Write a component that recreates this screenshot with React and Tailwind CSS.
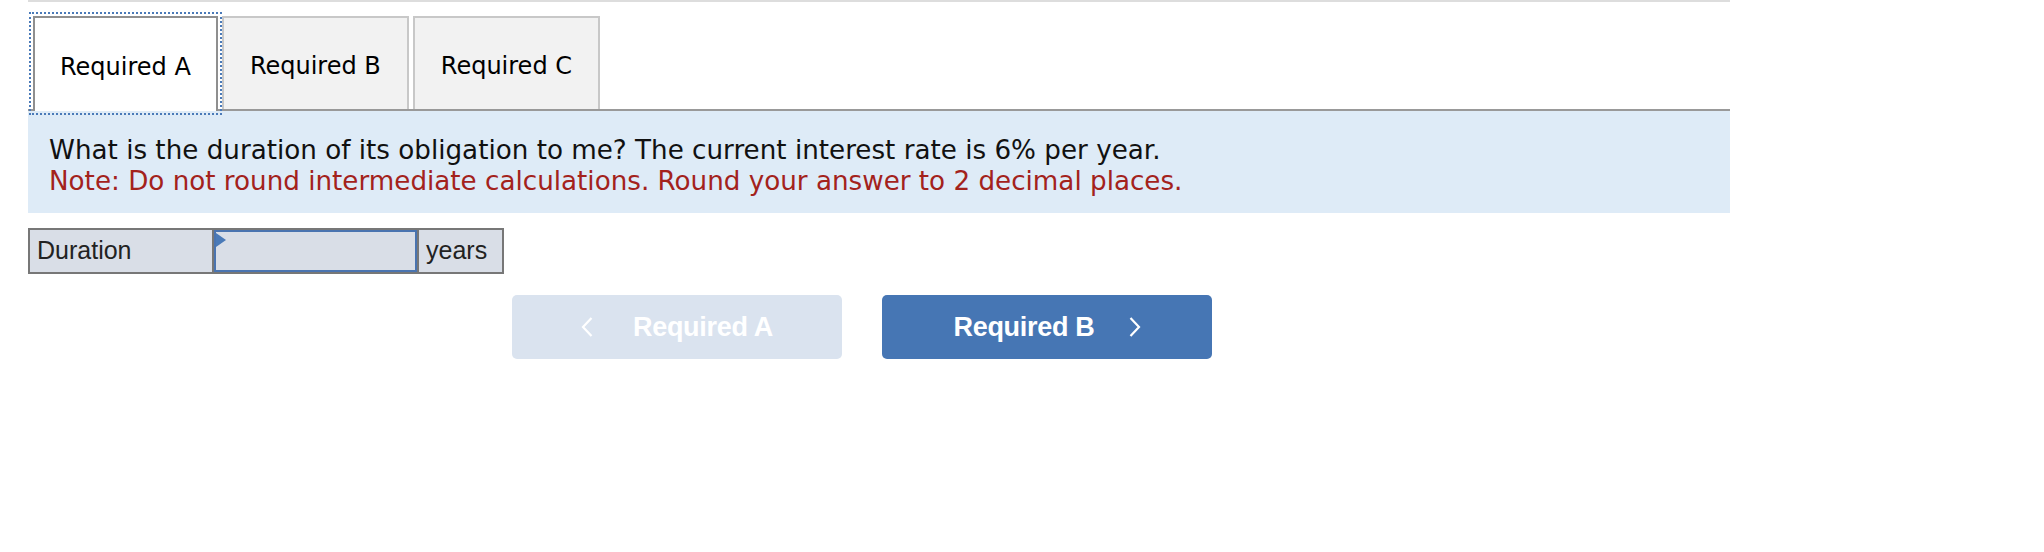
export default function App() {
  const dv = { fontFamily: '"DejaVu Sans", Verdana, sans-serif' };
  const ar = { fontFamily: '"Liberation Sans", Arial, sans-serif' };
  return (
    <div className="bg-white w-[2044px] h-[552px] pl-[28px]">
      <div className="w-[1702px]">
        <div className="h-[2px] bg-[#dddddd]" />
        <div className="mt-[14px] flex items-start gap-[4px] border-b-2 border-[#999999] h-[95px]" style={dv}>
          <div className="relative z-10 ml-[5px] h-[95px] bg-white border-2 border-b-0 border-[#8f8f8f] px-[25px] pt-[5px] flex items-center text-[24px] text-black outline-2 outline-dotted outline-[#4a7ab8] outline-offset-[2px]">
            Required A
          </div>
          <div className="h-[93px] bg-[#f2f2f2] border-2 border-b-0 border-[#c8c8c8] px-[26px] pt-[5px] flex items-center text-[24px] text-black">
            Required B
          </div>
          <div className="h-[93px] bg-[#f2f2f2] border-2 border-b-0 border-[#c8c8c8] px-[26px] pt-[5px] flex items-center text-[24px] text-black">
            Required C
          </div>
        </div>
        <div className="bg-[#deebf7] pl-[21px] pt-[24px] pb-[16px] text-[26.2px] leading-[31px]" style={dv}>
          <div className="text-[#111111]">What is the duration of its obligation to me? The current interest rate is 6% per year.</div>
          <div className="text-[#a3221c]">Note: Do not round intermediate calculations. Round your answer to 2 decimal places.</div>
        </div>
        <div className="mt-[15px] flex w-[476px] h-[46px] border-2 border-[#777777] bg-[#d9dee7] text-[25px] text-[#222222]" style={ar}>
          <div className="w-[184px] border-r-2 border-[#777777] pl-[7px] flex items-center">Duration</div>
          <div className="w-[205px] border-r-2 border-[#777777]">
            <div className="relative w-full h-full border-2 border-[#4a74b0] bg-[#d9dee7]">
              <svg className="absolute left-0 top-[1px]" width="11" height="15" viewBox="0 0 11 15">
                <polygon points="0,0 10,7 0,14" fill="#4a7ab8" />
              </svg>
            </div>
          </div>
          <div className="flex-1 pl-[7px] flex items-center">years</div>
        </div>
        <div className="mt-[21px] ml-[484px] flex gap-[40px]" style={ar}>
          <button className="w-[330px] h-[64px] rounded-[5px] bg-[#dae3ef] flex items-center justify-center gap-[40px] text-white font-bold text-[27px] tracking-[-0.3px]">
            <svg width="12" height="20" viewBox="0 0 12 20">
              <polyline points="10.5,1 2,10 10.5,19" fill="none" stroke="white" strokeWidth="2.2" />
            </svg>
            <span>Required A</span>
          </button>
          <button className="w-[330px] h-[64px] rounded-[5px] bg-[#4676b4] flex items-center justify-center gap-[34px] text-white font-bold text-[27px] tracking-[-0.3px]">
            <span>Required B</span>
            <svg width="12" height="20" viewBox="0 0 12 20">
              <polyline points="1.5,1 10,10 1.5,19" fill="none" stroke="white" strokeWidth="2.2" />
            </svg>
          </button>
        </div>
      </div>
    </div>
  );
}
